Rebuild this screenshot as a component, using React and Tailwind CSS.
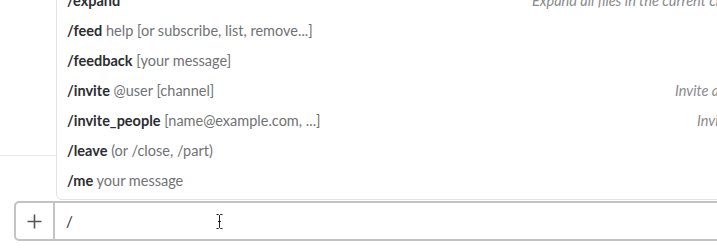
import React from "react";

const rows = [
  { cmd: "/expand", args: "", desc: "Expand all files in the current channel", lw: "w-[465px]" },
  { cmd: "/feed", args: "help [or subscribe, list, remove...]", desc: "", lw: "w-[465px]" },
  { cmd: "/feedback", args: "[your message]", desc: "", lw: "w-[465px]" },
  { cmd: "/invite", args: "@user [channel]", desc: "Invite another member to a channel", lw: "w-[608px]" },
  { cmd: "/invite_people", args: "[name@example.com, ...]", desc: "Invite people to your team", lw: "w-[630px]" },
  { cmd: "/leave", args: "(or /close, /part)", desc: "", lw: "w-[465px]" },
  { cmd: "/me", args: "your message", desc: "", lw: "w-[465px]" },
];

export default function App() {
  return (
    <div
      className="relative h-[251px] w-[717px] overflow-hidden bg-white"
      style={{ fontFamily: "Lato, 'Noto Sans', sans-serif" }}
    >
      <div className="flex h-full flex-col">
        <div className="flex flex-1 flex-col">
          <div className="h-[155px]" />
          <div className="h-px w-full bg-[#e8e8e8]" />
        </div>
        <div className="pb-[10px] pl-[14px]">
          <div className="flex h-[40px] w-[760px] items-stretch rounded-[5px] border-2 border-[#c3c3c3] bg-white">
            <div className="flex w-[39px] items-center justify-center border-r-2 border-[#c3c3c3]">
              <svg width="15" height="15" viewBox="0 0 15 15">
                <path d="M7.5 0.5V14.5M0.5 7.5H14.5" stroke="#555" strokeWidth="1.6" fill="none" />
              </svg>
            </div>
            <div className="flex flex-1 items-center pl-[11px] text-[15px] text-[#2c2d30]">
              <span>/</span>
              <span className="ml-[143px] mt-px">
                <svg width="7" height="15" viewBox="0 0 7 15">
                  <path
                    d="M0.5 0.5H2.5L3.5 1.5L4.5 0.5H6.5M3.5 1.5V13.5M0.5 14.5H2.5L3.5 13.5L4.5 14.5H6.5M2 7.5H5"
                    stroke="#222"
                    strokeWidth="1"
                    fill="none"
                  />
                </svg>
              </span>
            </div>
          </div>
        </div>
      </div>

      <div className="absolute bottom-[51px] left-[56px] w-[1000px] rounded-b-[6px] border border-[#e3e3e3] bg-white pb-[3px]">
        {rows.map((r) => (
          <div key={r.cmd} className="flex h-[30px] items-center whitespace-nowrap pl-[10px] text-[14.5px]">
            <div className={`${r.lw} shrink-0`}>
              <span className="font-bold text-[#2c2d30]">{r.cmd}</span>
              {r.args && <span className="text-[#717274]"> {r.args}</span>}
            </div>
            {r.desc && <div className="italic text-[#8a8a8d]">{r.desc}</div>}
          </div>
        ))}
      </div>
    </div>
  );
}
